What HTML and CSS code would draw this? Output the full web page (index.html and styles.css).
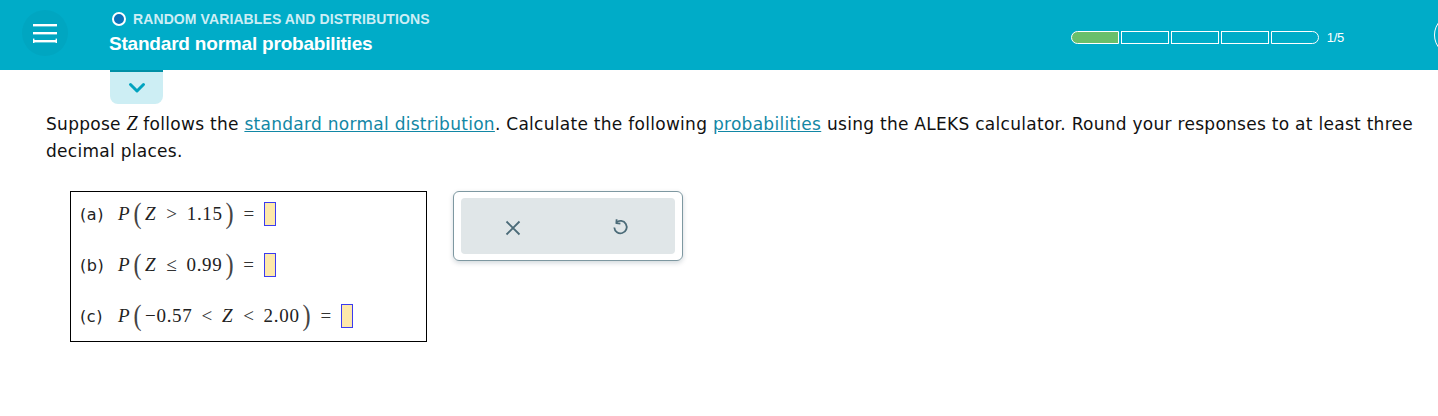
FILE: index.html
```html
<!DOCTYPE html>
<html>
<head>
<meta charset="utf-8">
<link rel="stylesheet" href="styles.css">
</head>
<body>
<header class="topbar">
  <div class="menu-btn">
    <svg width="26" height="20" viewBox="0 0 26 20">
      <rect x="1" y="1" width="24" height="2.4" fill="#fff"/>
      <rect x="1" y="9" width="24" height="2.4" fill="#fff"/>
      <rect x="1" y="17" width="24" height="2.4" fill="#fff"/>
      <rect x="1" y="15.6" width="1.4" height="5" fill="#fff"/>
      <rect x="23.6" y="15.6" width="1.4" height="5" fill="#fff"/>
    </svg>
  </div>
  <div class="titles">
    <div class="topic"><span class="radio"></span>RANDOM VARIABLES AND DISTRIBUTIONS</div>
    <div class="title">Standard normal probabilities</div>
  </div>
  <div class="progress">
    <div class="seg seg-first done"></div>
    <div class="seg"></div>
    <div class="seg"></div>
    <div class="seg"></div>
    <div class="seg seg-last"></div>
    <span class="count">1/5</span>
  </div>
  <div class="edge-circle"></div>
</header>
<div class="tab-row">
  <div class="tab">
    <svg width="18" height="12" viewBox="0 0 18 12"><path d="M2.5 2.5 L9 9 L15.5 2.5" fill="none" stroke="#00a3bf" stroke-width="3" stroke-linecap="round" stroke-linejoin="round"/></svg>
  </div>
</div>
<main class="content">
  <p class="prompt">Suppose <i class="mvar">Z</i> follows the <a href="#">standard normal distribution</a>. Calculate the following <a href="#">probabilities</a> using the ALEKS calculator. Round your responses to at least three decimal places.</p>
  <div class="work">
    <div class="problems">
      <div class="row"><span class="lbl">(a)</span><span class="math"><i>P</i><span class="paren">(</span><i>Z</i><span class="op">&gt;</span>1.15<span class="paren">)</span><span class="eq">=</span></span><span class="ans"></span></div>
      <div class="row"><span class="lbl">(b)</span><span class="math"><i>P</i><span class="paren">(</span><i>Z</i><span class="op">≤</span>0.99<span class="paren">)</span><span class="eq">=</span></span><span class="ans"></span></div>
      <div class="row"><span class="lbl">(c)</span><span class="math"><i>P</i><span class="paren">(</span>−0.57<span class="op">&lt;</span><i>Z</i><span class="op">&lt;</span>2.00<span class="paren">)</span><span class="eq">=</span></span><span class="ans"></span></div>
    </div>
    <div class="tools">
      <div class="tools-inner">
        <svg class="tool tool-x" width="18" height="18" viewBox="0 0 18 18"><path d="M2.5 2.5 L15.5 15.5 M15.5 2.5 L2.5 15.5" stroke="#4b6b78" stroke-width="1.8" fill="none"/></svg>
        <svg class="tool tool-undo" width="20" height="20" viewBox="0 0 20 20"><path d="M6.2 4.6 A6.2 6.2 0 1 1 4.3 9.5" fill="none" stroke="#4b6b78" stroke-width="1.8"/><path d="M6.6 1.2 L6.4 5.2 L10.4 5.6" fill="none" stroke="#4b6b78" stroke-width="1.8" stroke-linejoin="round"/></svg>
      </div>
    </div>
  </div>
</main>
</body>
</html>
```

FILE: styles.css
```css
html, body {
  margin: 0;
  padding: 0;
  background: #fff;
}
body {
  width: 1438px;
  height: 416px;
  overflow: hidden;
  font-family: "DejaVu Sans", Verdana, sans-serif;
}
.topbar {
  height: 70px;
  background: #00acc8;
  display: flex;
  align-items: flex-start;
  position: relative;
  overflow: hidden;
}
.menu-btn {
  width: 46px;
  height: 46px;
  border-radius: 50%;
  background: #00a6c1;
  margin: 10px 0 0 22px;
  display: flex;
  align-items: center;
  justify-content: center;
}
.titles {
  margin-left: 41px;
  padding-top: 10px;
  font-family: "Liberation Sans", Arial, sans-serif;
  font-weight: bold;
}
.topic {
  display: flex;
  align-items: center;
  font-size: 14px;
  color: #cdeef5;
  letter-spacing: 0.1px;
  margin-left: 3px;
  height: 18px;
}
.radio {
  width: 10px;
  height: 10px;
  border-radius: 50%;
  background: #0c71b8;
  border: 2px solid #fff;
  margin-right: 7px;
}
.title {
  font-size: 19px;
  color: #fff;
  margin-top: 5px;
  letter-spacing: -0.2px;
}
.progress {
  margin-left: auto;
  margin-top: 30px;
  display: flex;
  align-items: center;
  gap: 2px;
}
.seg {
  width: 46px;
  height: 11px;
  border: 1px solid #fff;
}
.seg-first {
  border-radius: 7px 0 0 7px;
}
.seg-last {
  border-radius: 0 7px 7px 0;
}
.seg.done {
  background: #69bf6b;
}
.count {
  margin-left: 6px;
  font-family: "Liberation Sans", Arial, sans-serif;
  font-size: 13px;
  color: #fff;
  letter-spacing: -0.3px;
}
.edge-circle {
  width: 40px;
  height: 40px;
  border: 1.5px solid #fff;
  border-radius: 50%;
  margin: 14px -38px 0 90px;
  flex-shrink: 0;
}
.tab-row {
  padding-left: 110px;
}
.tab {
  width: 53px;
  height: 32px;
  background: #cdeef4;
  border-top: 2px solid #008fa5;
  border-radius: 0 0 8px 8px;
  display: flex;
  align-items: center;
  justify-content: center;
}
.content {
  padding: 0 0 0 46px;
}
.prompt {
  margin: 7px 0 0;
  font-size: 17px;
  line-height: 27px;
  color: #111;
  letter-spacing: 0.28px;
  width: 1385px;
}
.prompt a {
  color: #1287a5;
  text-decoration: underline;
}
.mvar {
  font-family: "Liberation Serif", "Times New Roman", serif;
  font-size: 20px;
  line-height: 20px;
  letter-spacing: 0;
}
.work {
  display: flex;
  align-items: flex-start;
  margin-top: 26px;
  margin-left: 24px;
  gap: 26px;
}
.problems {
  width: 357px;
  height: 151px;
  border: 1px solid #000;
  padding: 9px 0 0 9px;
  box-sizing: border-box;
  display: flex;
  flex-direction: column;
  gap: 25px;
}
.row {
  display: flex;
  align-items: center;
  height: 26px;
}
.lbl {
  font-size: 16px;
  color: #222;
  letter-spacing: 0.6px;
  width: 38px;
}
.math {
  font-family: "Liberation Serif", "Times New Roman", serif;
  font-size: 19px;
  letter-spacing: 0.7px;
  color: #222;
  display: flex;
  align-items: center;
}
.math i {
  font-style: italic;
  margin-right: 1px;
}
.paren {
  font-size: 27px;
  transform: scale(0.9, 1.1);
  color: #444;
  margin: 0 2px;
  position: relative;
  top: -1px;
}
.op {
  margin: 0 9px;
  color: #333;
}
.eq {
  margin: 0 9px 0 7px;
  color: #333;
}
.ans {
  width: 10px;
  height: 22px;
  background: #fde8ab;
  border: 1.5px solid #3b3bf0;
}
.tools {
  width: 230px;
  height: 70px;
  border: 1px solid #7e98a1;
  border-radius: 6px;
  box-sizing: border-box;
  padding: 6px 7px;
  box-shadow: 0 2px 5px rgba(0, 40, 60, 0.18);
}
.tools-inner {
  height: 100%;
  background: #e0e6e8;
  border-radius: 4px;
  display: flex;
  align-items: center;
}
.tool {
  margin-top: 4px;
}
.tool-x {
  margin-left: 43px;
}
.tool-undo {
  margin-left: 88px;
}
```
